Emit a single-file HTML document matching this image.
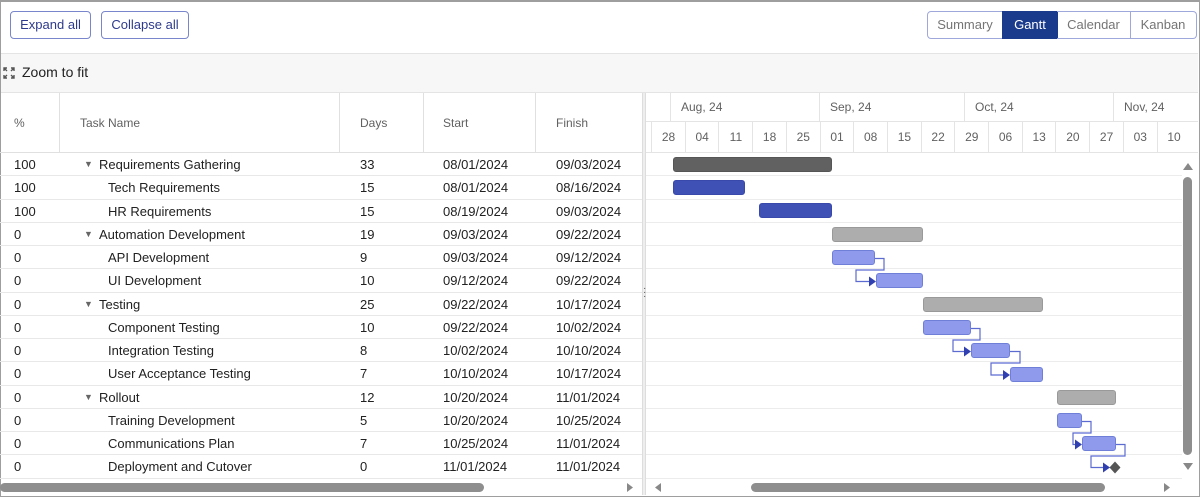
<!DOCTYPE html>
<html><head><meta charset="utf-8"><style>
*{box-sizing:border-box;margin:0;padding:0}
body{width:1200px;height:497px;overflow:hidden;background:#fff;font-family:"Liberation Sans",Arial,sans-serif;font-size:13px;color:#212121;position:relative}
.a{position:absolute}
.btn{position:absolute;top:11px;height:28px;border:1px solid #3f51b5aa;border-radius:4px;color:#2d3a8c;font-size:13px;line-height:26px;text-align:center;border-color:#7986cb}
.seg{position:absolute;top:11px;height:28px;line-height:26px;text-align:center;color:#757575;border:1px solid #9fa8da;font-size:13px}
.hd{position:absolute;top:93px;height:60px;line-height:60px;font-size:12px;color:#616161;border-right:1px solid #e0e0e0}
.row{position:absolute;left:0;width:642px;height:23.25px;border-bottom:1px solid #e8e8e8;font-size:13px;line-height:23px}
.row span{position:absolute;top:0}
.grow{position:absolute;left:646px;width:536px;height:23.25px;border-bottom:1px solid #ececec}
.wk{position:absolute;top:122px;height:31px;width:34px;border-left:1px solid #e4e4e4;text-align:center;line-height:31px;font-size:12px;color:#616161}
.mo{position:absolute;top:93px;height:29px;line-height:29px;border-left:1px solid #e4e4e4;font-size:12px;color:#616161;padding-left:10px}
.bar{position:absolute;height:15px;border-radius:3px}
.dk{background:#616161;border:1px solid #555}
.bl{background:#3f51b5;border:1px solid #3949ab}
.gr{background:#adadad;border:1px solid #999}
.lt{background:#8f9aec;border:1px solid #6f7fd8}
</style></head><body>
<div class="a" style="left:0;top:0;width:1200px;height:497px;border:1px solid #9e9e9e;border-top-width:2px"></div>
<div class="btn" style="left:10px;width:81px">Expand all</div>
<div class="btn" style="left:101px;width:88px">Collapse all</div>
<div class="seg" style="left:927px;width:76px;border-radius:4px 0 0 4px">Summary</div>
<div class="seg" style="left:1002px;width:56px;background:#1a3a8c;color:#fff;border-color:#1a3a8c">Gantt</div>
<div class="seg" style="left:1057px;width:74px;border-left:none">Calendar</div>
<div class="seg" style="left:1130px;width:67px;border-left:none;border-radius:0 4px 4px 0">Kanban</div>
<div class="a" style="left:1px;top:53px;width:1197px;height:40px;background:#f7f7f7;border-top:1px solid #e4e4e4;border-bottom:1px solid #e4e4e4"></div>
<svg class="a" style="left:3px;top:67px" width="12" height="12" viewBox="0 0 12 12" fill="none" stroke="#555" stroke-width="1.4"><path d="M1 4V1h3M8 1h3v3M11 8v3H8M4 11H1V8M1 1l3 3M11 1L8 4M11 11L8 8M1 11l3-3"/></svg>
<div class="a" style="left:22px;top:64px;font-size:14px;color:#212121">Zoom to fit</div>
<!-- grid header -->
<div class="hd" style="left:0;width:60px;padding-left:14px">%</div>
<div class="hd" style="left:60px;width:280px;padding-left:20px">Task Name</div>
<div class="hd" style="left:340px;width:84px;padding-left:20px">Days</div>
<div class="hd" style="left:424px;width:112px;padding-left:19px">Start</div>
<div class="hd" style="left:536px;width:106px;padding-left:20px;border-right:none">Finish</div>
<div class="a" style="left:0;top:152px;width:642px;border-top:1px solid #e0e0e0"></div>
<div class="a" style="left:642px;top:93px;width:4px;height:402px;background:#eee;border-left:1px solid #ddd;border-right:1px solid #ddd"></div>
<div class="a" style="left:643px;top:287px;color:#555;font-size:10px;line-height:4px">·<br>·<br>·</div>
<div id="rows"></div>
<!-- gantt header -->
<div class="a" style="left:646px;top:121px;width:552px;border-top:1px solid #e4e4e4"></div>
<div class="a" style="left:646px;top:152px;width:552px;border-top:1px solid #e4e4e4"></div>
<div class="mo" style="left:670px;width:149px">Aug, 24</div>
<div class="mo" style="left:819px;width:145px">Sep, 24</div>
<div class="mo" style="left:964px;width:149px">Oct, 24</div>
<div class="mo" style="left:1113px;width:86px">Nov, 24</div>
<div id="wks"></div>
<svg class="a" style="left:0;top:0" width="1200" height="497">
<g fill="none" stroke="#5c6bd0" stroke-width="1.2">
<path d="M875 258.5H884V270H856V281.5H870"/>
<path d="M971 328.5H980V340H953V351.5H965"/>
<path d="M1010 351.5H1020V363H991V375H1004"/>
<path d="M1082 421.5H1091V433H1073V444.5H1076"/>
<path d="M1116 444.5H1125V456H1091V467.5H1104"/>
</g>
<g fill="#3040b0">
<path d="M869 276.5l7 5-7 5z"/><path d="M964 346.5l7 5-7 5z"/><path d="M1003 370l7 5-7 5z"/><path d="M1075 439.5l7 5-7 5z"/><path d="M1103 462.5l7 5-7 5z"/>
</g>
<path d="M1115 461.5l5.5 6-5.5 6-5.5-6z" fill="#555"/>
<path d="M1183 170l5-7 5 7z" fill="#888"/><rect x="1183" y="177" width="9" height="278" rx="4.5" fill="#8e8e8e"/>
<path d="M1183 463l5 7 5-7z" fill="#888"/>
<rect x="751" y="483" width="354" height="9" rx="4.5" fill="#8e8e8e"/>
<path d="M661 483l-6 4.5 6 4.5z" fill="#888"/><path d="M1164 483l6 4.5-6 4.5z" fill="#888"/>
<rect x="0" y="483" width="484" height="9" rx="4.5" fill="#8e8e8e"/>
<path d="M627 483l6 4.5-6 4.5z" fill="#888"/>
</svg>
<div class="bar dk" style="left:673px;top:157px;width:159px"></div>
<div class="bar bl" style="left:673px;top:180px;width:72px"></div>
<div class="bar bl" style="left:759px;top:203px;width:73px"></div>
<div class="bar gr" style="left:832px;top:227px;width:91px"></div>
<div class="bar lt" style="left:832px;top:250px;width:43px"></div>
<div class="bar lt" style="left:876px;top:273px;width:47px"></div>
<div class="bar gr" style="left:923px;top:297px;width:120px"></div>
<div class="bar lt" style="left:923px;top:320px;width:48px"></div>
<div class="bar lt" style="left:971px;top:343px;width:39px"></div>
<div class="bar lt" style="left:1010px;top:367px;width:33px"></div>
<div class="bar gr" style="left:1057px;top:390px;width:59px"></div>
<div class="bar lt" style="left:1057px;top:413px;width:25px"></div>
<div class="bar lt" style="left:1082px;top:436px;width:34px"></div>
<script>
var d=[["100","Requirements Gathering",33,"08/01/2024","09/03/2024",1],["100","Tech Requirements",15,"08/01/2024","08/16/2024"],["100","HR Requirements",15,"08/19/2024","09/03/2024"],["0","Automation Development",19,"09/03/2024","09/22/2024",1],["0","API Development",9,"09/03/2024","09/12/2024"],["0","UI Development",10,"09/12/2024","09/22/2024"],["0","Testing",25,"09/22/2024","10/17/2024",1],["0","Component Testing",10,"09/22/2024","10/02/2024"],["0","Integration Testing",8,"10/02/2024","10/10/2024"],["0","User Acceptance Testing",7,"10/10/2024","10/17/2024"],["0","Rollout",12,"10/20/2024","11/01/2024",1],["0","Training Development",5,"10/20/2024","10/25/2024"],["0","Communications Plan",7,"10/25/2024","11/01/2024"],["0","Deployment and Cutover",0,"11/01/2024","11/01/2024"]];
var h="";d.forEach(function(r,i){var t=153+i*23.25;
h+='<div class="row" style="top:'+t+'px"><span style="left:14px">'+r[0]+'</span>'+(r[5]?'<span style="left:84px;font-size:9px;color:#666">&#9660;</span><span style="left:99px">':'<span style="left:108px">')+r[1]+'</span><span style="left:360px">'+r[2]+'</span><span style="left:443px">'+r[3]+'</span><span style="left:556px">'+r[4]+'</span></div>';
h+='<div class="grow" style="top:'+t+'px"></div>';});
document.getElementById("rows").innerHTML=h;
var w=["28","04","11","18","25","01","08","15","22","29","06","13","20","27","03","10"],g="";
w.forEach(function(x,i){g+='<div class="wk" style="left:'+(651+i*33.7)+'px">'+x+'</div>';});
document.getElementById("wks").innerHTML=g;
</script>
</body></html>
